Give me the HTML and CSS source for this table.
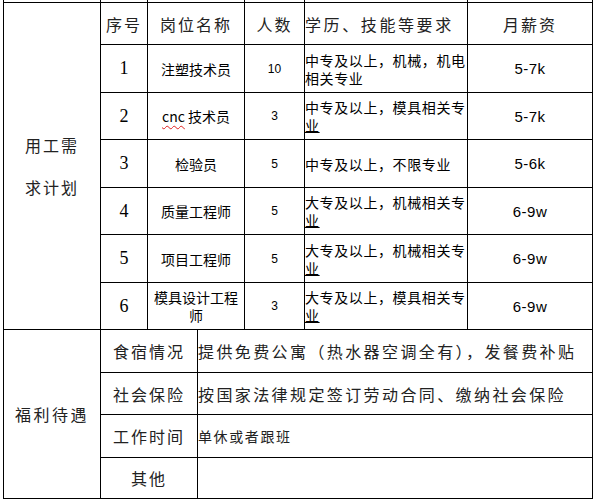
FILE: index.html
```html
<!DOCTYPE html>
<html lang="zh-CN">
<head>
<meta charset="utf-8">
<title>用工需求计划</title>
<link rel="stylesheet" href="styles.css">
</head>
<body>
<table class="plan">
  <tr class="stub">
    <td class="w0"></td><td class="w1"></td><td class="w2"></td><td class="w3"></td><td class="w4"></td><td class="w5"></td>
  </tr>
  <tr class="head">
    <td class="side" rowspan="7">用工需<br>求计划</td>
    <td class="h">序号</td>
    <td class="h">岗位名称</td>
    <td class="h">人数</td>
    <td class="h left">学历、技能等要求</td>
    <td class="h">月薪资</td>
  </tr>
  <tr class="tall">
    <td class="no">1</td>
    <td class="job">注塑技术员</td>
    <td class="cnt">10</td>
    <td class="req">中专及以上，机械，机电相关专业</td>
    <td class="pay">5-7k</td>
  </tr>
  <tr class="short">
    <td class="no">2</td>
    <td class="job"><span class="spell">cnc</span> 技术员</td>
    <td class="cnt">3</td>
    <td class="req">中专及以上，模具相关专<span class="ul">业</span></td>
    <td class="pay">5-7k</td>
  </tr>
  <tr class="tall">
    <td class="no">3</td>
    <td class="job">检验员</td>
    <td class="cnt">5</td>
    <td class="req">中专及以上，不限专业</td>
    <td class="pay">5-6k</td>
  </tr>
  <tr class="short">
    <td class="no">4</td>
    <td class="job">质量工程师</td>
    <td class="cnt">5</td>
    <td class="req">大专及以上，机械相关专<span class="ul">业</span></td>
    <td class="pay">6-9w</td>
  </tr>
  <tr class="tall">
    <td class="no">5</td>
    <td class="job">项目工程师</td>
    <td class="cnt">5</td>
    <td class="req">大专及以上，机械相关专<span class="ul">业</span></td>
    <td class="pay">6-9w</td>
  </tr>
  <tr class="short">
    <td class="no">6</td>
    <td class="job">模具设计工程师</td>
    <td class="cnt">3</td>
    <td class="req">大专及以上，模具相关专<span class="ul">业</span></td>
    <td class="pay">6-9w</td>
  </tr>
</table>
<table class="welfare">
  <tr class="b1">
    <td class="side2 wa" rowspan="4">福利待遇</td>
    <td class="lab wb">食宿情况</td>
    <td class="val wc">提供免费公寓（热水器空调全有），发餐费补贴</td>
  </tr>
  <tr class="b2">
    <td class="lab">社会保险</td>
    <td class="val">按国家法律规定签订劳动合同、缴纳社会保险</td>
  </tr>
  <tr class="b3">
    <td class="lab">工作时间</td>
    <td class="val small">单休或者跟班</td>
  </tr>
  <tr class="b4">
    <td class="lab">其他</td>
    <td class="val"></td>
  </tr>
</table>
</body>
</html>
```
FILE: styles.css
```css
html, body {
  background: #fff;
}
body {
  margin: 0;
  padding: 0 0 0 3px;
  font-family: "Noto Sans CJK SC", "Noto Sans", sans-serif;
  color: #000;
}
table {
  border-collapse: separate;
  border-spacing: 0;
  table-layout: fixed;
  width: 590px;
  border-left: 1px solid #000;
}
td {
  box-sizing: border-box;
  padding: 0;
  border-right: 1px solid #000;
  border-bottom: 1px solid #000;
  text-align: center;
  vertical-align: middle;
  overflow: hidden;
}

/* column widths (border-box, include right border) */
.w0 { width: 97px; }
.w1 { width: 47px; }
.w2 { width: 97px; }
.w3 { width: 60px; }
.w4 { width: 163px; }
.w5 { width: 125px; }

.stub { height: 2px; }
.stub td {
  border-bottom: 0;
  font-size: 0;
  line-height: 0;
  height: 2px;
}
.head { height: 43px; }
.head td { border-top: 1px solid #000; }
.tall { height: 48px; }
.short { height: 47px; }

.side {
  font-size: 16px;
  letter-spacing: 2px;
  line-height: 42px;
  color: #222;
}
.h {
  font-size: 16px;
  letter-spacing: 2px;
  line-height: 20px;
  color: #222;
}
.h.left {
  text-align: left;
  letter-spacing: 2.6px;
}
.no {
  font-family: "Liberation Serif", serif;
  font-size: 18px;
}
.job {
  font-size: 14px;
  line-height: 18px;
}
.spell {
  text-decoration: underline wavy #e02020;
  text-decoration-thickness: 1px;
  text-underline-offset: 3px;
}
.cnt {
  font-family: "Liberation Sans", sans-serif;
  font-size: 12px;
}
.req {
  text-align: left;
  font-size: 14px;
  letter-spacing: 0.6px;
  line-height: 18px;
}
.ul {
  text-decoration: underline;
  text-decoration-thickness: 1px;
}
.pay {
  font-family: "Liberation Sans", sans-serif;
  font-size: 15px;
  letter-spacing: 0.5px;
}

/* welfare table */
.wa { width: 97px; }
.wb { width: 97px; }
.wc { width: 395px; }
.b1 { height: 43px; }
.b2 { height: 42px; }
.b3 { height: 43px; }
.b4 { height: 41px; }
.side2 {
  font-size: 16px;
  letter-spacing: 2.5px;
  color: #222;
}
.lab {
  font-size: 16px;
  letter-spacing: 2px;
  color: #222;
}
.val {
  text-align: left;
  font-size: 16px;
  letter-spacing: 2.4px;
  white-space: nowrap;
  color: #222;
}
.val.small {
  font-size: 14px;
  letter-spacing: 1.6px;
}
```
